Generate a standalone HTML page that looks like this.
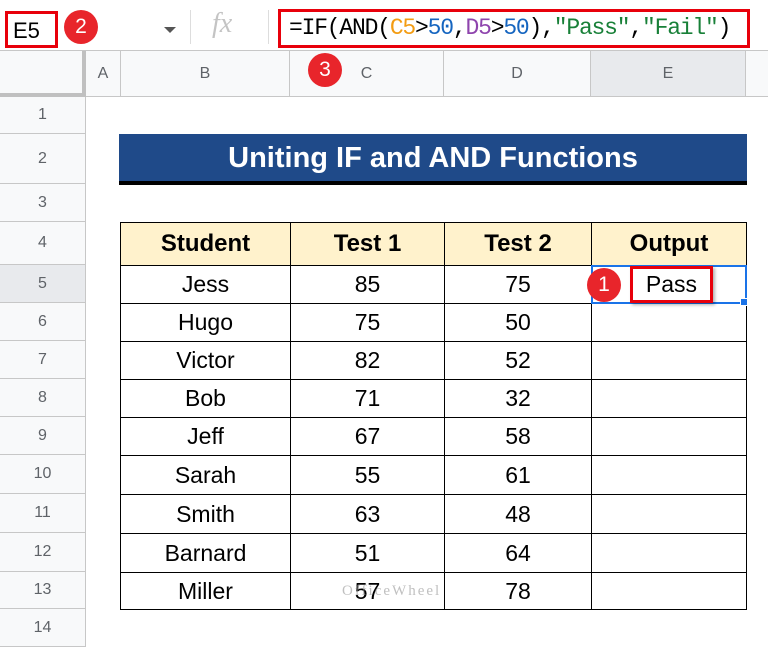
<!DOCTYPE html>
<html><head><meta charset="utf-8"><style>
*{margin:0;padding:0;box-sizing:border-box}
body{width:768px;height:634px;overflow:hidden;background:#fff;font-family:"Liberation Sans",Arial,sans-serif;position:relative}
.a{position:absolute}
.rh{position:absolute;left:0;width:86px;background:#f8f9fa;border-bottom:1px solid #c7c7c7;border-right:1px solid #c7c7c7;color:#5f6368;font-size:16px;display:flex;align-items:center;justify-content:center}
.ch{position:absolute;top:51px;height:46px;background:#f8f9fa;border-right:1px solid #c7c7c7;border-bottom:1px solid #c7c7c7;color:#5f6368;font-size:16px;display:flex;align-items:center;justify-content:center}
table{position:absolute;left:120px;top:222px;border-collapse:collapse}
td{border:1.5px solid #000;text-align:center;font-size:23px;color:#000;padding:0}
th{border:1.5px solid #000;background:#fff2cc;font-size:24px;font-weight:bold;height:43px}
.circ{position:absolute;width:34px;height:34px;border-radius:50%;background:#e8252b;color:#fff;font-size:21px;display:flex;align-items:center;justify-content:center}
</style></head><body>
<div class="a" style="left:0;top:0;width:768px;height:51px;background:#fff;border-bottom:1px solid #c7c7c7"></div>
<div class="a" style="left:5px;top:11px;width:53px;height:37px;border:3px solid #e8000b;font-size:22px;padding:4px 0 0 5px">E5</div>
<div class="circ" style="left:64px;top:10px">2</div>
<div class="a" style="left:164px;top:27px;border-left:6px solid transparent;border-right:6px solid transparent;border-top:6px solid #555"></div>
<div class="a" style="left:190px;top:10px;width:1px;height:34px;background:#ddd"></div>
<div class="a" style="left:212px;top:8px;font-family:'Liberation Serif',serif;font-style:italic;font-size:28px;color:#c4c4c4">fx</div>
<div class="a" style="left:268px;top:10px;width:1px;height:34px;background:#ddd"></div>
<div class="a" style="left:278px;top:9px;width:472px;height:39px;border:3px solid #e8000b"></div>
<div class="a" style="left:289px;top:15px;font-family:'Liberation Mono',monospace;font-size:23px;letter-spacing:-1.2px;white-space:nowrap">=IF(AND(<span style="color:#f39c12">C5</span>&gt;<span style="color:#1565c0">50</span>,<span style="color:#8e44ad">D5</span>&gt;<span style="color:#1565c0">50</span>),<span style="color:#188038">"Pass"</span>,<span style="color:#188038">"Fail"</span>)</div>
<div class="ch" style="left:0;width:86px;border-right:4px solid #c0c0c0;border-bottom:4px solid #c0c0c0"></div>
<div class="ch" style="left:86px;width:35px">A</div>
<div class="ch" style="left:121px;width:169px">B</div>
<div class="ch" style="left:290px;width:154px">C</div>
<div class="ch" style="left:444px;width:147px">D</div>
<div class="ch" style="left:591px;width:155px;background:#e8eaed">E</div>
<div class="ch" style="left:746px;width:30px"></div>
<div class="circ" style="left:308px;top:53px">3</div>
<div class="rh" style="top:97px;height:37px">1</div>
<div class="rh" style="top:134px;height:50px">2</div>
<div class="rh" style="top:184px;height:38px">3</div>
<div class="rh" style="top:222px;height:43px">4</div>
<div class="rh" style="top:265px;height:38px;background:#e8eaed">5</div>
<div class="rh" style="top:303px;height:38px">6</div>
<div class="rh" style="top:341px;height:38px">7</div>
<div class="rh" style="top:379px;height:38px">8</div>
<div class="rh" style="top:417px;height:38px">9</div>
<div class="rh" style="top:455px;height:39px">10</div>
<div class="rh" style="top:494px;height:39px">11</div>
<div class="rh" style="top:533px;height:39px">12</div>
<div class="rh" style="top:572px;height:37px">13</div>
<div class="rh" style="top:609px;height:38px">14</div>
<div class="a" style="left:119px;top:134px;width:628px;height:51px;background:#1f4a89;border-bottom:4px solid #000;color:#fff;font-weight:bold;font-size:29px;text-align:center;line-height:48px">Uniting IF and AND Functions</div>
<table>
<tr><th style="width:170px">Student</th><th style="width:154px">Test 1</th><th style="width:147px">Test 2</th><th style="width:155px">Output</th></tr>
<tr style="height:38px"><td>Jess</td><td>85</td><td>75</td><td></td></tr>
<tr style="height:38px"><td>Hugo</td><td>75</td><td>50</td><td></td></tr>
<tr style="height:38px"><td>Victor</td><td>82</td><td>52</td><td></td></tr>
<tr style="height:38px"><td>Bob</td><td>71</td><td>32</td><td></td></tr>
<tr style="height:38px"><td>Jeff</td><td>67</td><td>58</td><td></td></tr>
<tr style="height:39px"><td>Sarah</td><td>55</td><td>61</td><td></td></tr>
<tr style="height:39px"><td>Smith</td><td>63</td><td>48</td><td></td></tr>
<tr style="height:39px"><td>Barnard</td><td>51</td><td>64</td><td></td></tr>
<tr style="height:37px"><td>Miller</td><td>57</td><td>78</td><td></td></tr>
</table>
<div class="a" style="left:591px;top:265px;width:156px;height:39px;border:2px solid #1a73e8"></div>
<div class="a" style="left:740px;top:298px;width:8px;height:8px;background:#1a73e8;border:1px solid #fff"></div>
<div class="a" style="left:630px;top:266px;width:83px;height:37px;border:3px solid #e8000b;background:#fff;font-size:23px;text-align:center;line-height:31px;box-shadow:2px 2px 3px rgba(0,0,0,.3)">Pass</div>
<div class="circ" style="left:587px;top:268px">1</div>
<div class="a" style="left:342px;top:583px;color:rgba(150,150,150,.6);font-family:'Liberation Serif',serif;font-size:15px;letter-spacing:2px">OfficeWheel</div>
</body></html>
